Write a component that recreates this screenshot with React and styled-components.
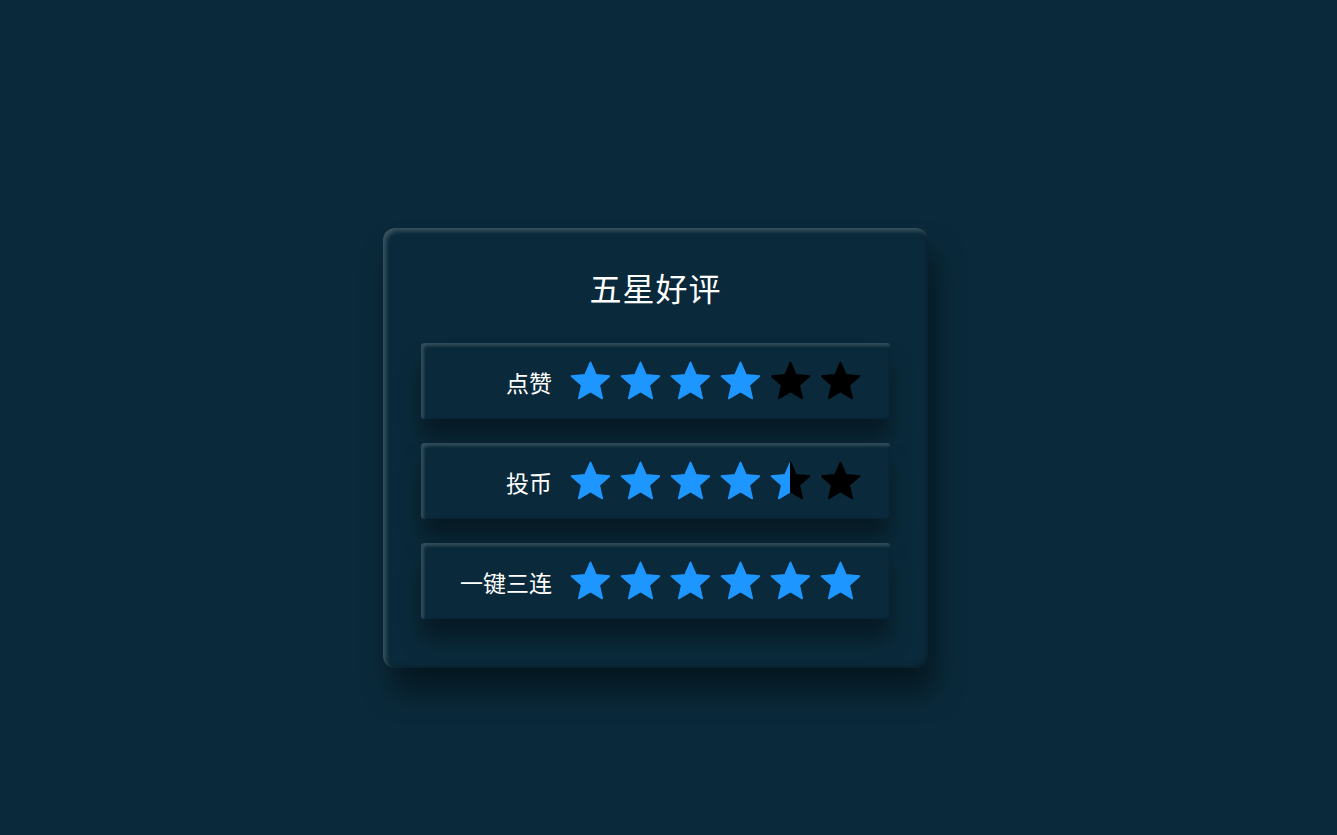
import React from "react";
import styled, { createGlobalStyle } from "styled-components";

const GlobalStyle = createGlobalStyle`
  html, body {
    margin: 0;
    padding: 0;
    background: #0a2a3b;
  }
  body {
    font-family: "Noto Sans CJK SC", "Noto Sans", sans-serif;
    color: #fff;
  }
`;

const Page = styled.div`
  min-height: 100vh;
  box-sizing: border-box;
  padding: 228px 0 0 383px;
`;

const Card = styled.div`
  width: 545px;
  height: 440px;
  box-sizing: border-box;
  padding: 34px 38px 0;
  border-radius: 12px;
  background: #0a2a3b;
  box-shadow: inset 3px 3px 4px rgba(255, 255, 255, 0.2),
    inset -2px -2px 4px rgba(0, 0, 0, 0.25),
    8px 24px 30px rgba(0, 0, 0, 0.45);
`;

const Title = styled.h2`
  margin: 0 0 31px;
  height: 50px;
  line-height: 50px;
  text-align: center;
  font-size: 32px;
  font-weight: 400;
  letter-spacing: 1px;
`;

const List = styled.div`
  display: flex;
  flex-direction: column;
  gap: 24px;
`;

const Row = styled.div`
  height: 76px;
  display: flex;
  align-items: center;
  gap: 18px;
  border-radius: 3px;
  background: #0a2a3b;
  box-shadow: inset 3px 3px 3px rgba(255, 255, 255, 0.16),
    inset -1px -1px 2px rgba(0, 0, 0, 0.2),
    0 20px 22px rgba(0, 0, 0, 0.38);
`;

const Label = styled.span`
  width: 131px;
  text-align: right;
  font-size: 23px;
  line-height: 1;
  padding-top: 3px;
`;

const Stars = styled.div`
  display: flex;
  gap: 9px;
`;

const StarSvg = styled.svg`
  width: 41px;
  height: 40px;
  display: block;
`;

const BLUE = "#1e96ff";

// five-point star around (20.5, 21.3)
const starPoints = (() => {
  const cx = 20.5, cy = 21.3, R = 20, r = 9.2;
  const pts = [];
  for (let i = 0; i < 10; i++) {
    const rad = i % 2 === 0 ? R : r;
    const a = -Math.PI / 2 + (i * Math.PI) / 5;
    pts.push(`${(cx + rad * Math.cos(a)).toFixed(2)},${(cy + rad * Math.sin(a)).toFixed(2)}`);
  }
  return pts.join(" ");
})();

const Star = ({ fill, id }) => {
  // fill: 0..1 portion painted blue from the left
  const gid = `g-${id}`;
  return (
    <StarSvg viewBox="0 0 41 40">
      <defs>
        <linearGradient id={gid} x1="0" x2="1" y1="0" y2="0">
          <stop offset={fill} stopColor={BLUE} />
          <stop offset={fill} stopColor="#000" />
        </linearGradient>
      </defs>
      <polygon
        points={starPoints}
        fill={`url(#${gid})`}
        stroke={`url(#${gid})`}
        strokeWidth="1.6"
        strokeLinejoin="round"
      />
    </StarSvg>
  );
};

const ratings = [
  { label: "点赞", value: 4 },
  { label: "投币", value: 4.5 },
  { label: "一键三连", value: 6 },
];

export default function App() {
  return (
    <>
      <GlobalStyle />
      <Page>
        <Card>
          <Title>五星好评</Title>
          <List>
            {ratings.map((r, ri) => (
              <Row key={r.label}>
                <Label>{r.label}</Label>
                <Stars>
                  {Array.from({ length: 6 }, (_, i) => {
                    const f = Math.max(0, Math.min(1, r.value - i));
                    return <Star key={i} id={`${ri}-${i}`} fill={f} />;
                  })}
                </Stars>
              </Row>
            ))}
          </List>
        </Card>
      </Page>
    </>
  );
}
